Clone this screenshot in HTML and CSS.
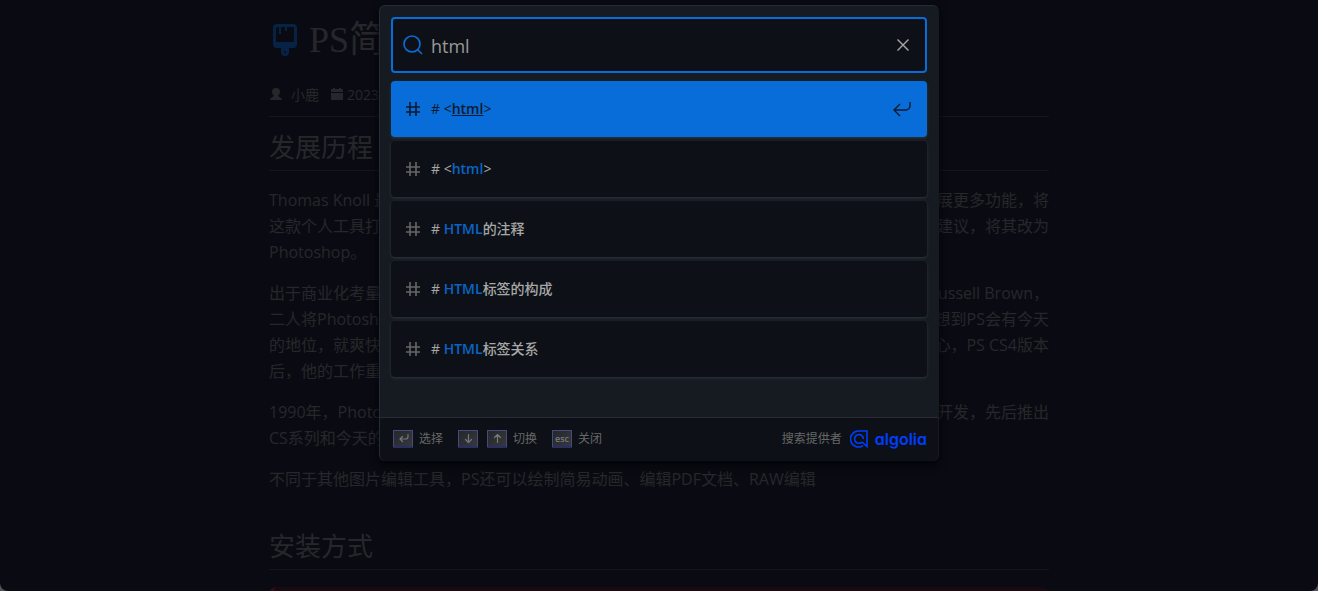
FILE: index.html
```html
<!DOCTYPE html>
<html lang="zh-CN">
<head>
    <meta charset="UTF-8">
    <meta name="viewport" content="width=device-width, initial-scale=1">
    <title>PS简介</title>
    <link rel="stylesheet" href="styles.css">
</head>
<body>
    <div class="page">
        <main class="article">
            <h1 class="title">
                <svg class="title-icon" width="24" height="32" viewBox="0 0 24 32" fill="none">
                    <path d="M4 1.5h16q2.500 0 2.500 2.500v16q0 2.500-2.500 2.500H4q-2.500 0-2.500-2.500V4q0-2.500 2.500-2.500z" stroke="currentColor" stroke-width="3"/>
                    <path d="M1 18h22v3q0 3-3 3h-4v4a4 4 0 0 1-8 0v-4H4q-3 0-3-3z" fill="currentColor"/>
                    <path d="M7 2v8M13 2v5" stroke="currentColor" stroke-width="2"/>
                    <circle cx="12" cy="28" r="1" fill="#0a0b12"/>
                </svg>
                <span>PS简</span>
            </h1>
            <div class="meta">
                <svg width="14" height="14" viewBox="0 0 14 14" fill="currentColor"><path d="M7 1a4 4 0 0 1 4 4q0 2-2 4l3 2q1 1 1 2H1q0-1 1-2l3-2Q3 7 3 5a4 4 0 0 1 4-4z"/></svg>
                <span class="author">小鹿</span>
                <svg width="14" height="14" viewBox="0 0 14 14" fill="currentColor"><path d="M3 1h2v1h4V1h2v1h1q1 0 1 1v2H1V3q0-1 1-1h1zM1 6h12v6q0 1-1 1H2q-1 0-1-1z"/></svg>
                <span>2023年</span>
            </div>
            <h2>发展历程</h2>
            <p>
                <span class="line"><span>Thomas Knoll 最</span><span>展更多功能，将</span></span>
                <span class="line"><span>这款个人工具打</span><span>建议，将其改为</span></span>
                <span class="line"><span>Photoshop。</span></span>
            </p>
            <p>
                <span class="line"><span>出于商业化考量</span><span>Russell Brown，</span></span>
                <span class="line"><span>二人将Photosho</span><span>想到PS会有今天</span></span>
                <span class="line"><span>的地位，就爽快</span><span>心，PS CS4版本</span></span>
                <span class="line"><span>后，他的工作重</span></span>
            </p>
            <p>
                <span class="line"><span>1990年，Photo</span><span>开发，先后推出</span></span>
                <span class="line"><span>CS系列和今天的</span></span>
            </p>
            <p>不同于其他图片编辑工具，PS还可以绘制简易动画、编辑PDF文档、RAW编辑</p>
            <h2 class="install">安装方式</h2>
            <div class="danger"></div>
        </main>
    </div>

    <div class="modal" role="dialog" aria-label="搜索">
        <form class="search-bar">
            <label for="search">
                <svg width="20" height="20" viewBox="0 0 20 20" fill="none" stroke="currentColor" stroke-width="1.6"><circle cx="9" cy="9" r="8"/><path d="M14.5 14.5L19 19"/></svg>
            </label>
            <input id="search" type="text" value="html" aria-label="搜索文档">
            <button class="clear" type="reset" aria-label="清除">
                <svg width="20" height="20" viewBox="0 0 20 20" fill="none" stroke="currentColor" stroke-width="1.4"><path d="M10 10l5.500-5.500L10 10l5.500 5.500L10 10l-5.500-5.500L10 10l-5.500 5.500L10 10z"/></svg>
            </button>
        </form>

        <ul class="hits">
            <li><a class="hit active" href="#html">
                <svg class="hash" width="20" height="20" viewBox="0 0 20 20"><path d="M13 13h4-4V8H7v5h6v4-4H7V8H3h4V3v5h6V3v5h4-4v5zm-6 0v4-4H3h4z" fill="none" stroke="currentColor" stroke-width="1.6" stroke-linecap="round"/></svg>
                <span class="hit-title"># &lt;<mark>html</mark>&gt;</span>
                <svg width="20" height="20" viewBox="0 0 20 20" fill="none" stroke="currentColor" stroke-width="1.4"><path d="M18 3v4c0 2-2 4-4 4H2"/><path d="M8 17l-6-6 6-6"/></svg>
            </a></li>
            <li><a class="hit" href="#html-tag">
                <svg class="hash" width="20" height="20" viewBox="0 0 20 20"><path d="M13 13h4-4V8H7v5h6v4-4H7V8H3h4V3v5h6V3v5h4-4v5zm-6 0v4-4H3h4z" fill="none" stroke="currentColor" stroke-width="1.6" stroke-linecap="round"/></svg>
                <span class="hit-title"># &lt;<mark>html</mark>&gt;</span>
            </a></li>
            <li><a class="hit" href="#comment">
                <svg class="hash" width="20" height="20" viewBox="0 0 20 20"><path d="M13 13h4-4V8H7v5h6v4-4H7V8H3h4V3v5h6V3v5h4-4v5zm-6 0v4-4H3h4z" fill="none" stroke="currentColor" stroke-width="1.6" stroke-linecap="round"/></svg>
                <span class="hit-title"># <mark>HTML</mark>的注释</span>
            </a></li>
            <li><a class="hit" href="#structure">
                <svg class="hash" width="20" height="20" viewBox="0 0 20 20"><path d="M13 13h4-4V8H7v5h6v4-4H7V8H3h4V3v5h6V3v5h4-4v5zm-6 0v4-4H3h4z" fill="none" stroke="currentColor" stroke-width="1.6" stroke-linecap="round"/></svg>
                <span class="hit-title"># <mark>HTML</mark>标签的构成</span>
            </a></li>
            <li><a class="hit" href="#relation">
                <svg class="hash" width="20" height="20" viewBox="0 0 20 20"><path d="M13 13h4-4V8H7v5h6v4-4H7V8H3h4V3v5h6V3v5h4-4v5zm-6 0v4-4H3h4z" fill="none" stroke="currentColor" stroke-width="1.6" stroke-linecap="round"/></svg>
                <span class="hit-title"># <mark>HTML</mark>标签关系</span>
            </a></li>
        </ul>

        <footer class="footer">
            <ul class="commands">
                <li>
                    <kbd><svg width="15" height="15" viewBox="0 0 15 15" fill="none" stroke="currentColor" stroke-width="1.2" stroke-linecap="round" stroke-linejoin="round"><path d="M12 3.5v2q0 2.500-2.500 2.500H4M6.500 5.500L4 8l2.500 2.500"/></svg></kbd>
                    <span>选择</span>
                </li>
                <li>
                    <kbd><svg width="15" height="15" viewBox="0 0 15 15" fill="none" stroke="currentColor" stroke-width="1.2" stroke-linecap="round" stroke-linejoin="round"><path d="M7.500 3.500v8M10.500 8.500l-3 3-3-3"/></svg></kbd>
                    <kbd><svg width="15" height="15" viewBox="0 0 15 15" fill="none" stroke="currentColor" stroke-width="1.2" stroke-linecap="round" stroke-linejoin="round"><path d="M7.500 11.500v-8M10.500 6.500l-3-3-3 3"/></svg></kbd>
                    <span>切换</span>
                </li>
                <li>
                    <kbd>esc</kbd>
                    <span>关闭</span>
                </li>
            </ul>
            <a class="provider" href="#algolia">
                <span>搜索提供者</span>
                <span class="brand">
                    <svg width="18" height="18" viewBox="0 0 18 18" fill="none" stroke="currentColor"><path d="M13 15.6A8 8 0 1 1 9 1h8v15.5l-5-4.500" stroke-width="1.6"/><path d="M12 12.200a4.400 4.400 0 1 1 1.400-3.200" stroke-width="1.6"/></svg>
                    <span>algolia</span>
                </span>
            </a>
        </footer>
    </div>
</body>
</html>
```
FILE: styles.css
```css
* { box-sizing: border-box; }

html { background: #515157; }

body {
    margin: 0;
    font-family: "Open Sans", "Noto Sans CJK SC", sans-serif;
    color: #27272b;
}

ul { list-style: none; margin: 0; padding: 0; }
a { color: inherit; text-decoration: none; }
svg { flex: none; display: block; }

/* page under the overlay */
.page {
    height: 100vh;
    overflow: hidden;
    background: #0a0b12;
    border-radius: 0 0 8px 8px;
}

.article {
    max-width: 780px;
    margin: 0 auto;
    padding-top: 16px;
}

.title {
    display: flex;
    align-items: center;
    gap: 12px;
    height: 48px;
    margin: 0;
    padding-left: 4px;
    font: 400 36px/48px "Liberation Serif", "Noto Sans CJK SC", serif;
}

.title-icon { color: #062346; }

.meta {
    display: flex;
    align-items: center;
    gap: 3px;
    height: 53px;
    padding-top: 7px;
    margin-bottom: 8px;
    border-bottom: 1px solid #14151d;
    font-size: 14px;
}

.author { margin: 0 8px 0 5px; }

h2 {
    height: 46px;
    margin: 0 0 16px;
    border-bottom: 1px solid #14151d;
    font-size: 26px;
    font-weight: 400;
    line-height: 44px;
}

p {
    margin: 0 0 15px;
    font-size: 16px;
    line-height: 26px;
}

.line { display: flex; justify-content: space-between; }

.install { margin: 32px 0 17px; }

.danger {
    height: 60px;
    background: #1b0912;
    border-left: 4px solid #3a0d18;
    border-radius: 8px;
}

/* search modal */
.modal {
    position: absolute;
    top: 5px;
    left: 0;
    right: 0;
    max-width: 560px;
    margin: 0 auto;
    background: #161b22;
    border: 1px solid #272a38;
    border-right-color: #161b22;
    border-bottom: 0;
    border-radius: 6px;
    box-shadow: 0 3px 8px #000308;
    color: #a8a8a8;
}

.search-bar {
    display: flex;
    align-items: center;
    height: 56px;
    margin: 11px 11px 8px;
    padding: 0 12px 0 10px;
    background: #0d1117;
    border: 2px solid #096dd9;
    border-radius: 4px;
}

.search-bar label { color: #096dd9; }

.search-bar input {
    flex: 1;
    min-width: 0;
    padding: 2px 8px 0;
    border: 0;
    outline: 0;
    background: none;
    color: #999;
    font: 18px "Open Sans", sans-serif;
}

.clear {
    padding: 0;
    border: 0;
    background: none;
    color: #a8a8a8;
}

.hits {
    display: grid;
    gap: 4px;
    padding: 0 11px 40px;
}

.hit {
    display: flex;
    align-items: center;
    gap: 8px;
    height: 56px;
    padding: 0 15px 0 12px;
    background: #0d1117;
    border-radius: 4px;
    box-shadow: 0 1px 3px #30363d;
    font-size: 14px;
    font-weight: 500;
}

.hit-title { flex: 1; padding-bottom: 2px; }
.hash { color: #666; }
mark { background: none; color: #0964c6; font-weight: 600; }

.hit.active { background: #096dd9; color: #0d1a2c; }
.active .hash { color: inherit; }
.active mark { color: inherit; text-decoration: underline; }

.footer {
    display: flex;
    align-items: center;
    justify-content: space-between;
    height: 44px;
    padding: 0 11px 2px 13px;
    background: #0d1117;
    border-top: 1px solid #292c35;
    border-radius: 0 0 6px 6px;
    color: #686868;
    font-size: 12px;
}

.commands { display: flex; gap: 15px; }
.commands li { display: flex; align-items: center; gap: 6px; }
.commands span, .provider > span:first-child { padding-bottom: 1px; }
kbd + kbd { margin-left: 3px; }

kbd {
    display: flex;
    align-items: center;
    justify-content: center;
    width: 20px;
    height: 18px;
    background: linear-gradient(135deg, #24272c, #36383e);
    border: 1px solid #484b79;
    border-bottom: 2px solid #292d61;
    border-radius: 1px;
    color: #777;
    font: 600 9px "Open Sans", sans-serif;
}

.provider, .brand { display: flex; align-items: center; }
.provider { gap: 8px; }

.brand {
    gap: 7px;
    color: #003dff;
    font: 600 16px/18px Inter, sans-serif;
    font-feature-settings: "cv11";
}
```
